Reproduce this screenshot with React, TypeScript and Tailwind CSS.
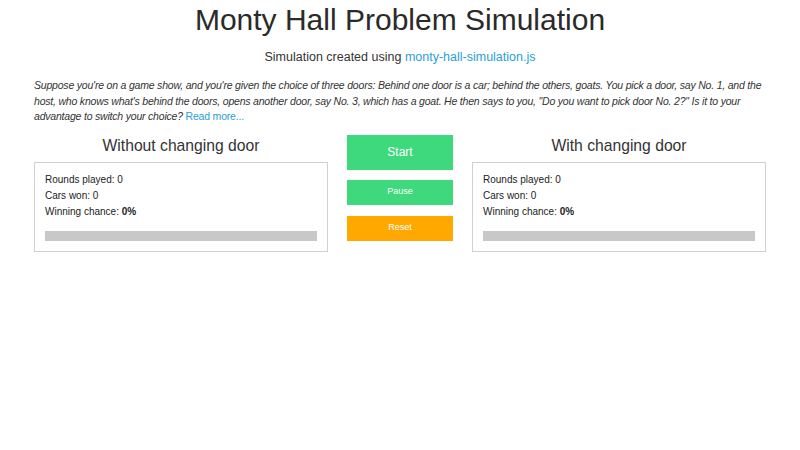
import React from "react";

type Stats = { rounds: number; cars: number; chance: number };

function StatsPanel({ title, stats }: { title: string; stats: Stats }) {
  return (
    <div className="flex flex-col">
      <h2 className="text-center text-[15.7px] leading-[22px] text-[#333] mb-[5px]">{title}</h2>
      <div className="border border-[#d0d0d0] px-[10px] pt-[9px] pb-[10px] text-[10px] leading-[16px] text-[#222]">
        <div>Rounds played: {stats.rounds}</div>
        <div>Cars won: {stats.cars}</div>
        <div>
          Winning chance: <b>{stats.chance}%</b>
        </div>
        <div className="mt-[11px] h-[10px] bg-[#c8c8c8]" />
      </div>
    </div>
  );
}

export default function App() {
  const empty: Stats = { rounds: 0, cars: 0, chance: 0 };
  return (
    <div className="w-[800px] h-[450px] bg-white font-['Liberation_Sans',Arial,sans-serif] text-[#333]">
      <div className="w-[732px] mx-auto">
        <h1 className="text-center text-[30px] leading-[40px] text-[#2a2a2a]">
          Monty Hall Problem Simulation
        </h1>
        <p className="text-center text-[12.5px] leading-[20px] mt-[7px] text-[#333]">
          Simulation created using{" "}
          <a className="text-[#2a9fd6]" href="#">
            monty-hall-simulation.js
          </a>
        </p>
        <p className="italic text-[10.5px] tracking-[-0.2px] leading-[15.5px] mt-[11px] text-[#333]">
          Suppose you're on a game show, and you're given the choice of three doors: Behind one door is a car;
          behind the others, goats. You pick a door, say No. 1, and the host, who knows what's behind the doors,
          opens another door, say No. 3, which has a goat. He then says to you, "Do you want to pick door No. 2?"
          Is it to your advantage to switch your choice?{" "}
          <a className="not-italic text-[#2a9fd6]" href="#">
            Read more...
          </a>
        </p>
        <div className="grid grid-cols-[294px_106px_294px] gap-x-[19px] mt-[10px]">
          <StatsPanel title="Without changing door" stats={empty} />
          <div className="flex flex-col">
            <button className="h-[35px] bg-[#3dd97c] text-white text-[12px]">Start</button>
            <button className="h-[25px] mt-[10px] bg-[#3dd97c] text-white text-[9px]">Pause</button>
            <button className="h-[25px] mt-[11px] bg-[#ffa800] text-white text-[9px]">Reset</button>
          </div>
          <StatsPanel title="With changing door" stats={empty} />
        </div>
      </div>
    </div>
  );
}
